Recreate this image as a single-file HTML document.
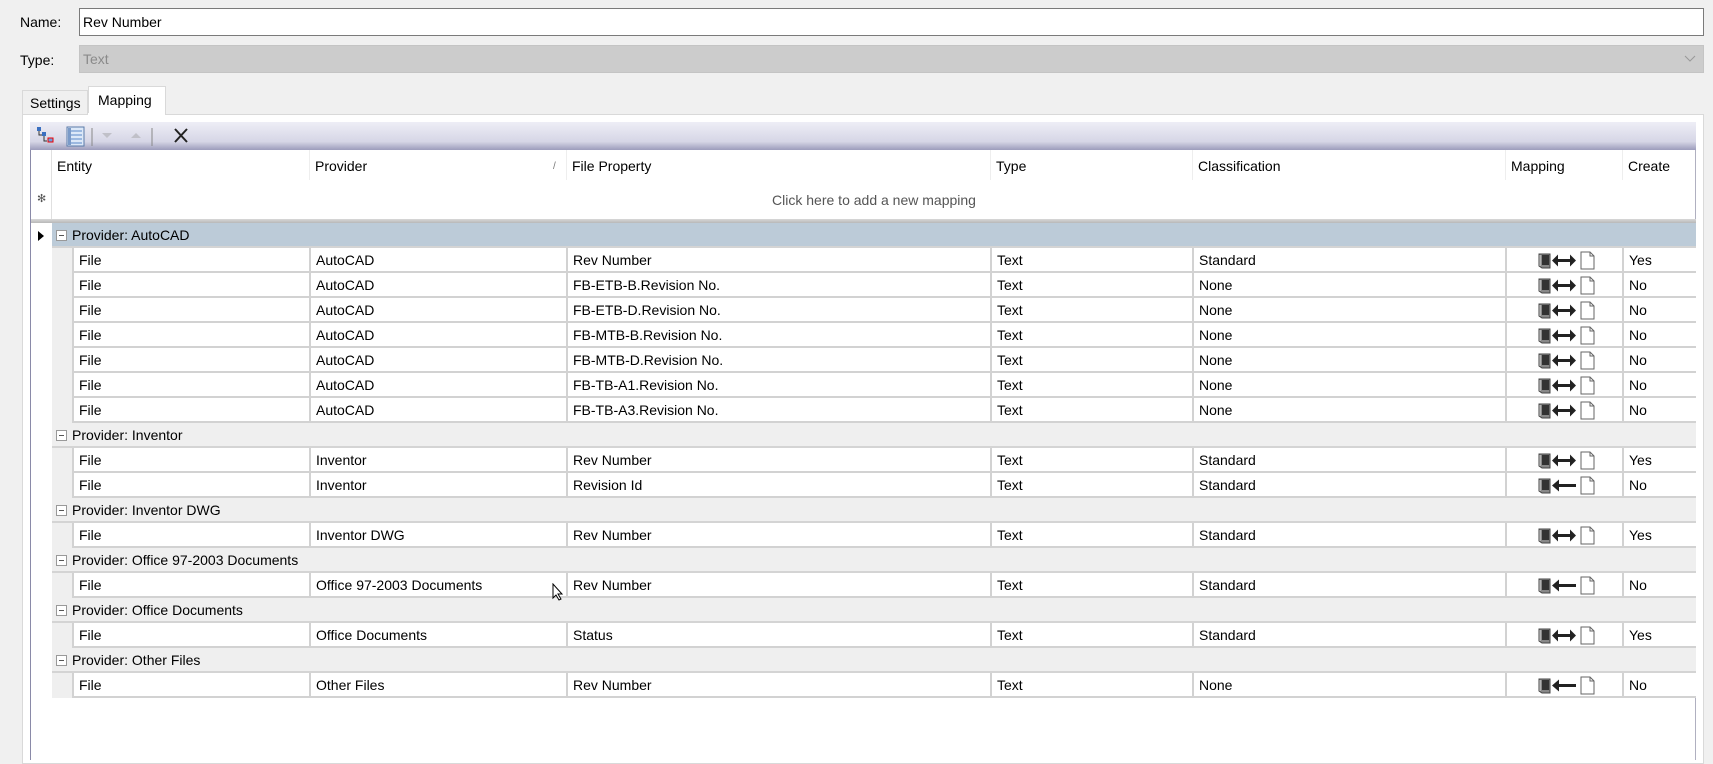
<!DOCTYPE html><html><head><meta charset="utf-8"><style>
*{box-sizing:border-box;margin:0;padding:0}
body{width:1713px;height:757px;background:#f0f0f0;font-family:"Liberation Sans",sans-serif;font-size:14px;color:#000;position:relative;overflow:hidden}
.a{position:absolute;white-space:nowrap}
.row{position:absolute;left:52px;width:1644px;height:25px}
.grp{background:#efefef;border-bottom:2px solid #d4d4d4}
.grp span{position:absolute;top:4px;left:20px}
.box{position:absolute;left:4px;top:7px;width:11px;height:11px;border:1px solid #999;background:#fff}
.box:after{content:"";position:absolute;left:2px;top:4px;width:5px;height:1px;background:#555}
.d{background:#fff;border-bottom:2px solid #d2d2d2}
.d .c{position:absolute;top:0;height:23px;padding:4px 0 0 5px;border-left:2px solid #d2d2d2}
.ico{position:absolute;left:30px;top:3px}
</style></head><body>
<div class="a" style="left:20px;top:14px">Name:</div>
<div class="a" style="left:79px;top:8px;width:1625px;height:28px;background:#fff;border:1px solid #7a7a7a;padding:5px 3px">Rev Number</div>
<div class="a" style="left:20px;top:52px">Type:</div>
<div class="a" style="left:79px;top:45px;width:1625px;height:28px;background:#cccccc;border:1px solid #c4c4c4;padding:5px 3px;color:#8a8a8a">Text</div>
<svg class="a" style="left:1684px;top:55px" width="12" height="8"><path d="M1 1l5 5 5-5" stroke="#999" fill="none"/></svg>
<div class="a" style="left:22px;top:90px;width:66px;height:25px;border:1px solid #d9d9d9;border-bottom:none;padding:4px 0 0 7px">Settings</div>
<div class="a" style="left:88px;top:86px;width:78px;height:30px;background:#fff;border:1px solid #d9d9d9;border-bottom:none;padding:5px 0 0 9px">Mapping</div>
<div class="a" style="left:22px;top:114px;width:1682px;height:650px;background:#fff;border:1px solid #d9d9d9"></div>
<div class="a" style="left:88px;top:113px;width:77px;height:3px;background:#fff"></div>
<div class="a" style="left:30px;top:122px;width:1666px;height:28px;background:linear-gradient(#eeeef6,#d6d6e6 70%,#9c9cbc)"></div>
<svg class="a" style="left:34px;top:125px" width="160" height="22">
<rect x="3" y="2" width="4" height="4" fill="#3a6fc0"/><rect x="8" y="7" width="4" height="4" fill="#3a6fc0"/><path d="M5 6v4h3M10 11v5h3" stroke="#333" fill="none"/><rect x="14" y="13" width="5" height="4" fill="#6aa0e0" stroke="#e00"/>
<rect x="33" y="2" width="17" height="19" fill="#dce8f8" stroke="#5a7aa8"/><path d="M37 6h11M37 10h11M37 14h11M37 18h11" stroke="#5a88c8"/><rect x="34" y="3" width="3" height="17" fill="#7a9ac8"/>
<line x1="58" y1="3" x2="58" y2="21" stroke="#888"/>
<path d="M68 8h10l-5 5z" fill="#c0c0c8"/><path d="M97 13h10l-5-5z" fill="#c0c0c8"/>
<line x1="118" y1="3" x2="118" y2="21" stroke="#888"/>
<path d="M141 4l12 13M153 4l-12 13" stroke="#222" stroke-width="2"/></svg>
<div class="a" style="left:30px;top:150px;width:1666px;height:610px;border-left:1px solid #8a8aa8;border-right:1px solid #b0b0c0;background:#fff"></div>
<div class="a" style="left:31px;top:150px;width:21px;height:72px;border-right:1px solid #e0e0e0"></div>
<div class="a" style="left:57px;top:158px">Entity</div>
<div class="a" style="left:309px;top:150px;height:30px;border-left:1px solid #eee;padding:8px 5px">Provider</div>
<div class="a" style="left:553px;top:161px;font-size:10px;color:#777">/</div>
<div class="a" style="left:566px;top:150px;height:30px;border-left:1px solid #eee;padding:8px 5px">File Property</div>
<div class="a" style="left:990px;top:150px;height:30px;border-left:1px solid #eee;padding:8px 5px">Type</div>
<div class="a" style="left:1192px;top:150px;height:30px;border-left:1px solid #eee;padding:8px 5px">Classification</div>
<div class="a" style="left:1505px;top:150px;height:30px;border-left:1px solid #eee;padding:8px 5px">Mapping</div>
<div class="a" style="left:1622px;top:150px;height:30px;border-left:1px solid #eee;padding:8px 5px">Create</div>
<div class="a" style="left:37px;top:192px;font-size:11px;color:#555">✻</div>
<div class="a" style="left:52px;top:192px;width:1644px;text-align:center;color:#555">Click here to add a new mapping</div>
<div class="a" style="left:31px;top:219px;width:1665px;height:4px;background:linear-gradient(#d8d8d8,#b8b8b8)"></div>
<svg class="a" style="left:37px;top:230px" width="8" height="12"><path d="M1 1l6 5-6 5z" fill="#000"/></svg>
<div id="g"></div>
<script>
var B='<svg class="ico" width="60" height="19"><path d="M2 3h11v14H5l-3-2z" fill="#888" stroke="#444"/><rect x="5" y="4" width="7" height="10" fill="#333"/><path d="M3 4v11" stroke="#ddd"/>';
var P='<path d="M44 1h9l4 4v13H44z" fill="#fff" stroke="#666"/><path d="M53 1v4h4" fill="none" stroke="#666"/></svg>';
var BI=B+'<path d="M17 9.5h20" stroke="#222" stroke-width="3"/><path d="M15 9.5l6-6v12zM39 9.5l-6-6v12z" fill="#222"/>'+P;
var LI=B+'<path d="M20 9.5h19" stroke="#222" stroke-width="3"/><path d="M15 9.5l7-6v12z" fill="#222"/>'+P;
var data=[["AutoCAD",true,[["AutoCAD","Rev Number","Standard",BI,"Yes"],["AutoCAD","FB-ETB-B.Revision No.","None",BI,"No"],["AutoCAD","FB-ETB-D.Revision No.","None",BI,"No"],["AutoCAD","FB-MTB-B.Revision No.","None",BI,"No"],["AutoCAD","FB-MTB-D.Revision No.","None",BI,"No"],["AutoCAD","FB-TB-A1.Revision No.","None",BI,"No"],["AutoCAD","FB-TB-A3.Revision No.","None",BI,"No"]]],
["Inventor",false,[["Inventor","Rev Number","Standard",BI,"Yes"],["Inventor","Revision Id","Standard",LI,"No"]]],
["Inventor DWG",false,[["Inventor DWG","Rev Number","Standard",BI,"Yes"]]],
["Office 97-2003 Documents",false,[["Office 97-2003 Documents","Rev Number","Standard",LI,"No"]]],
["Office Documents",false,[["Office Documents","Status","Standard",BI,"Yes"]]],
["Other Files",false,[["Other Files","Rev Number","None",LI,"No"]]]];
var y=223,h='';
data.forEach(function(g){
h+='<div class="row grp" style="top:'+y+'px;'+(g[1]?'background:#bccbd8;':'')+'"><div class="box"></div><span>Provider: '+g[0]+'</span></div>';y+=25;
g[2].forEach(function(r){
h+='<div class="row" style="top:'+y+'px;background:#efefef"></div><div class="row d" style="top:'+y+'px;left:72px;width:1624px">'+
'<div class="c" style="left:0;width:237px">File</div><div class="c" style="left:237px;width:257px">'+r[0]+'</div><div class="c" style="left:494px;width:424px">'+r[1]+'</div><div class="c" style="left:918px;width:202px">Text</div><div class="c" style="left:1120px;width:313px">'+r[2]+'</div><div class="c" style="left:1433px;width:117px">'+r[3]+'</div><div class="c" style="left:1550px;width:74px">'+r[4]+'</div></div>';
y+=25;});});
document.getElementById('g').innerHTML=h;
</script>
<svg class="a" style="left:552px;top:583px" width="12" height="18"><path d="M1 1v14l3-3 3 5 2-1-3-5h4z" fill="#fff" stroke="#000"/></svg>
</body></html>
